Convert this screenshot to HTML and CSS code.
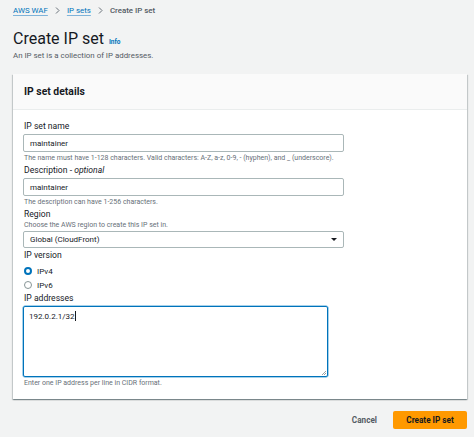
FILE: index.html
```html
<!DOCTYPE html>
<html>
<head>
<meta charset="utf-8">
<link rel="stylesheet" href="styles.css">
</head>
<body>
<div class="page">
  <nav class="crumbs">
    <a class="crumb-link">AWS WAF</a>
    <svg class="chev" width="5" height="7" viewBox="0 0 5 7"><path d="M1 0.5 L4 3.5 L1 6.5" fill="none" stroke="#687078" stroke-width="1"/></svg>
    <a class="crumb-link">IP sets</a>
    <svg class="chev" width="5" height="7" viewBox="0 0 5 7"><path d="M1 0.5 L4 3.5 L1 6.5" fill="none" stroke="#687078" stroke-width="1"/></svg>
    <span class="crumb-current">Create IP set</span>
  </nav>
  <div class="title-row">
    <h1 class="title">Create IP set</h1>
    <span class="info">Info</span>
  </div>
  <p class="subtitle">An IP set is a collection of IP addresses.</p>

  <section class="card">
    <div class="card-header">IP set details</div>
    <div class="card-body">
      <div class="label">IP set name</div>
      <div class="input">maintainer</div>
      <div class="hint">The name must have 1-128 characters. Valid characters: A-Z, a-z, 0-9, - (hyphen), and _ (underscore).</div>

      <div class="label">Description - <i>optional</i></div>
      <div class="input">maintainer</div>
      <div class="hint">The description can have 1-256 characters.</div>

      <div class="label">Region</div>
      <div class="desc">Choose the AWS region to create this IP set in.</div>
      <div class="input select"><span>Global (CloudFront)</span><span class="caret"></span></div>

      <div class="label after-select">IP version</div>
      <div class="radio-row first"><span class="radio checked"></span><span>IPv4</span></div>
      <div class="radio-row"><span class="radio"></span><span>IPv6</span></div>

      <div class="label">IP addresses</div>
      <div class="textarea"><span>192.0.2.1/32</span><span class="cursor"></span><span class="grip"></span></div>
      <div class="hint">Enter one IP address per line in CIDR format.</div>
    </div>
  </section>

  <div class="actions">
    <span class="cancel">Cancel</span>
    <span class="primary">Create IP set</span>
  </div>
</div>
</body>
</html>
```

FILE: styles.css
```css
html, body {
  margin: 0;
  padding: 0;
  background: #f2f3f3;
  font-family: Roboto, "Noto Sans", sans-serif;
  color: #16191f;
}
.page {
  padding: 3px 7px 0 13px;
}
.crumbs {
  display: flex;
  align-items: center;
  height: 14px;
  font-size: 7.9px;
  gap: 7px;
}
.crumb-link {
  color: #0073bb;
  text-decoration: underline;
  text-decoration-color: #7fb3d9;
  text-underline-offset: 2px;
}
.chev {
  display: block;
}
.crumb-current {
  color: #545b64;
  font-weight: 500;
}
.title-row {
  display: flex;
  align-items: baseline;
  margin-top: 12px;
  height: 20px;
  gap: 5px;
}
.title {
  margin: 0;
  font-size: 16px;
  font-weight: 400;
  line-height: 20px;
}
.info {
  color: #0073bb;
  font-size: 6.5px;
  font-weight: 700;
}
.subtitle {
  margin: 1px 0 0 0;
  font-size: 7.9px;
  line-height: 12px;
  color: #545b64;
}
.card {
  margin-top: 12px;
  background: #fff;
  box-shadow: 0 1px 1px 0 rgba(0, 28, 36, 0.3), 1px 1px 1px 0 rgba(0, 28, 36, 0.15), -1px 1px 1px 0 rgba(0, 28, 36, 0.15);
}
.card-header {
  height: 36px;
  box-sizing: border-box;
  background: #fafafa;
  border-bottom: 1px solid #eaeded;
  padding: 0 11px;
  display: flex;
  align-items: center;
  font-size: 10.4px;
  font-weight: 700;
}
.card-body {
  padding: 10px 10px 10px 10px;
}
.label {
  font-size: 8.6px;
  line-height: 12px;
  margin-left: 1px;
}
.label.after-select {
  margin-top: 1px;
}
.desc {
  font-size: 7px;
  line-height: 10px;
  color: #687078;
  margin-left: 1px;
}
.hint {
  font-size: 7px;
  line-height: 11px;
  color: #687078;
  margin-top: 1px;
  margin-left: 1px;
}
.input {
  margin-top: 2px;
  width: 321px;
  height: 18px;
  box-sizing: border-box;
  border: 1px solid #aab7b8;
  border-radius: 2px;
  padding: 0 6px;
  display: flex;
  align-items: center;
  font-size: 8px;
  font-weight: 400;
}
.select {
  margin-top: 1px;
  height: 17px;
  justify-content: space-between;
  padding-right: 6px;
}
.caret {
  width: 0;
  height: 0;
  border-left: 3px solid transparent;
  border-right: 3px solid transparent;
  border-top: 3.5px solid #16191f;
}
.radio-row {
  display: flex;
  align-items: center;
  height: 14px;
  gap: 5px;
  font-size: 8px;
  padding-left: 1px;
}
.radio-row.first {
  margin-top: 3px;
}
.radio {
  width: 8px;
  height: 8px;
  box-sizing: border-box;
  border: 1px solid #879596;
  border-radius: 50%;
  background: #fff;
}
.radio.checked {
  border: 2.5px solid #0073bb;
}
.textarea {
  position: relative;
  margin-top: 2px;
  width: 305px;
  height: 71px;
  box-sizing: border-box;
  border: 1px solid #0073bb;
  border-radius: 2px;
  box-shadow: 0 0 0 0.5px #4fa3d6;
  padding: 4px 5px;
  font-size: 8px;
  line-height: 11px;
  display: flex;
  align-items: flex-start;
}
.cursor {
  display: inline-block;
  width: 1px;
  height: 10px;
  background: #16191f;
}
.grip {
  position: absolute;
  right: 1px;
  bottom: 1px;
  width: 4px;
  height: 4px;
  background: linear-gradient(135deg, transparent 45%, #9aa3a6 45%, #9aa3a6 55%, transparent 55%, transparent 75%, #9aa3a6 75%, #9aa3a6 85%, transparent 85%);
}
.actions {
  display: flex;
  justify-content: flex-end;
  align-items: center;
  gap: 16px;
  margin-top: 12px;
}
.cancel {
  font-size: 8.2px;
  font-weight: 700;
  color: #545b64;
}
.primary {
  width: 74px;
  height: 18px;
  background: #ff9900;
  border-radius: 2px;
  display: flex;
  align-items: center;
  justify-content: center;
  font-size: 8.2px;
  font-weight: 700;
  color: #16191f;
}
```
